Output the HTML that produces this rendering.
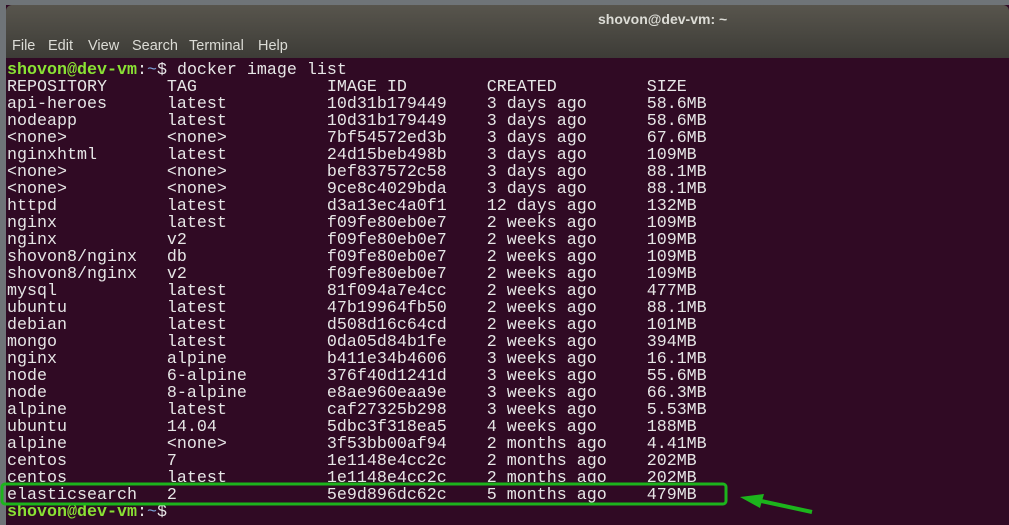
<!DOCTYPE html>
<html><head><style>
body{margin:0;width:1009px;height:525px;overflow:hidden;background:#6f7478;position:relative;font-family:"Liberation Sans",sans-serif}
#win{position:absolute;left:6px;top:5px;right:0;bottom:0;background:#300a24}
#title{position:absolute;left:0;top:0;right:0;height:53px;background:linear-gradient(#58554d,#3d3c37);border-radius:6px 6px 0 0}
#title .t{position:absolute;left:592px;top:6px;color:#dcdcd6;font-weight:bold;font-size:14px}
.m{position:absolute;top:33px;color:#dcdcd6;font-size:14.5px}
pre{position:absolute;left:1px;top:57px;margin:0;font-family:"Liberation Mono",monospace;font-size:16.67px;line-height:17px;color:#e6e6e6}
.g{color:#8ae234;font-weight:bold}
.b{color:#7da2d8}
</style></head><body>
<div id="win">
<div id="title"><span class="t">shovon@dev-vm: ~</span></div>
<span class="m" style="left:6px">File</span><span class="m" style="left:42px">Edit</span><span class="m" style="left:82px">View</span><span class="m" style="left:126px">Search</span><span class="m" style="left:183px">Terminal</span><span class="m" style="left:252px">Help</span>
<pre><span class="g">shovon@dev-vm</span>:<span class="b">~</span>$ docker image list
REPOSITORY      TAG             IMAGE ID        CREATED         SIZE
api-heroes      latest          10d31b179449    3 days ago      58.6MB
nodeapp         latest          10d31b179449    3 days ago      58.6MB
&lt;none&gt;          &lt;none&gt;          7bf54572ed3b    3 days ago      67.6MB
nginxhtml       latest          24d15beb498b    3 days ago      109MB
&lt;none&gt;          &lt;none&gt;          bef837572c58    3 days ago      88.1MB
&lt;none&gt;          &lt;none&gt;          9ce8c4029bda    3 days ago      88.1MB
httpd           latest          d3a13ec4a0f1    12 days ago     132MB
nginx           latest          f09fe80eb0e7    2 weeks ago     109MB
nginx           v2              f09fe80eb0e7    2 weeks ago     109MB
shovon8/nginx   db              f09fe80eb0e7    2 weeks ago     109MB
shovon8/nginx   v2              f09fe80eb0e7    2 weeks ago     109MB
mysql           latest          81f094a7e4cc    2 weeks ago     477MB
ubuntu          latest          47b19964fb50    2 weeks ago     88.1MB
debian          latest          d508d16c64cd    2 weeks ago     101MB
mongo           latest          0da05d84b1fe    2 weeks ago     394MB
nginx           alpine          b411e34b4606    3 weeks ago     16.1MB
node            6-alpine        376f40d1241d    3 weeks ago     55.6MB
node            8-alpine        e8ae960eaa9e    3 weeks ago     66.3MB
alpine          latest          caf27325b298    3 weeks ago     5.53MB
ubuntu          14.04           5dbc3f318ea5    4 weeks ago     188MB
alpine          &lt;none&gt;          3f53bb00af94    2 months ago    4.41MB
centos          7               1e1148e4cc2c    2 months ago    202MB
centos          latest          1e1148e4cc2c    2 months ago    202MB
elasticsearch   2               5e9d896dc62c    5 months ago    479MB
<span class="g">shovon@dev-vm</span>:<span class="b">~</span>$</pre>
</div>
<svg style="position:absolute;left:0;top:0" width="1009" height="525">
<rect x="2" y="484" width="724" height="20" rx="3" fill="none" stroke="#1cb41c" stroke-width="3"/>
<line x1="812" y1="512" x2="752" y2="499" stroke="#1cb41c" stroke-width="4"/>
<polygon points="740,497 764,494 760,508" fill="#1cb41c"/>
</svg>
</body></html>
